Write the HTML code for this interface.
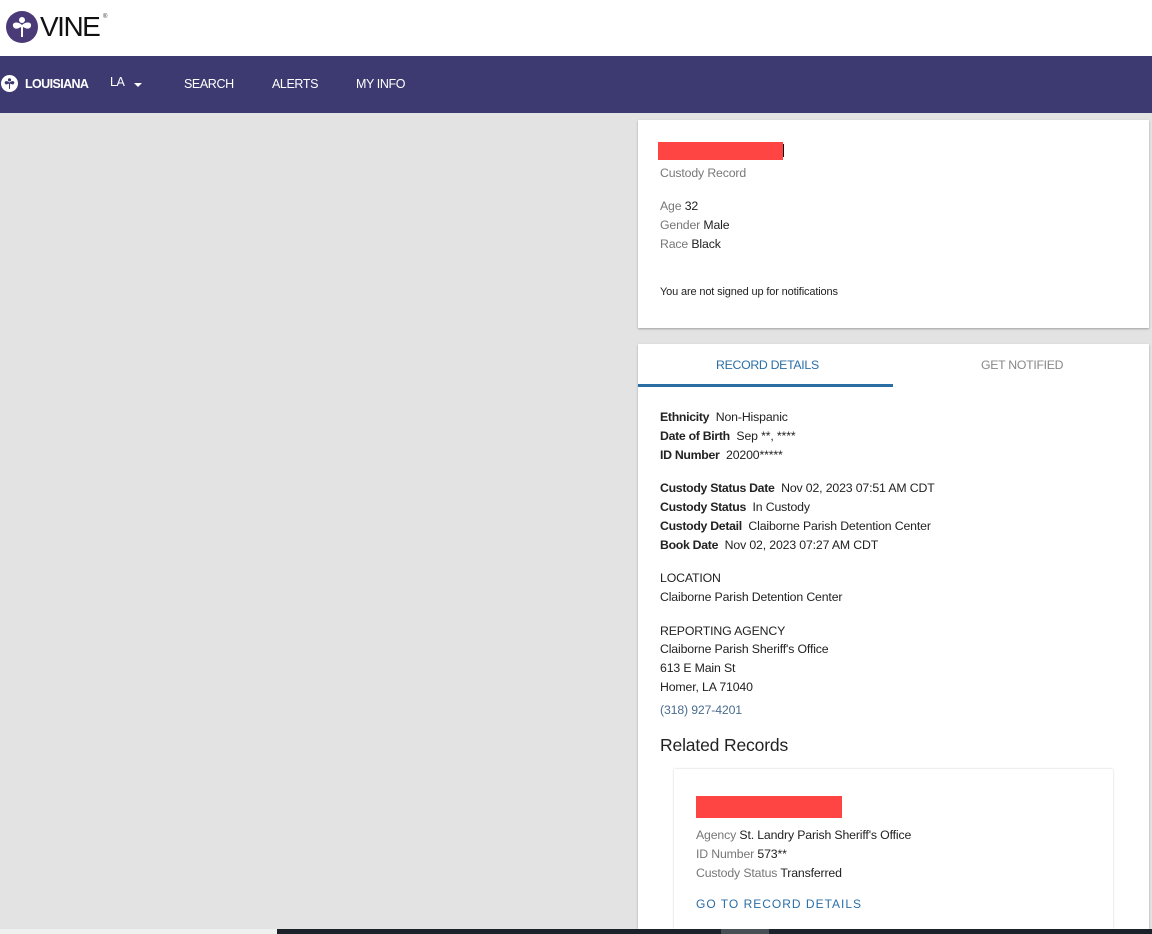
<!DOCTYPE html>
<html><head><meta charset="utf-8"><style>
*{margin:0;padding:0;box-sizing:border-box}
body{width:1152px;height:934px;overflow:hidden;background:#e3e3e3;font-family:"Liberation Sans",sans-serif;position:relative;color:#222}
.top{position:absolute;left:0;top:0;width:1152px;height:56px;background:#fff}
.nav{position:absolute;left:0;top:56px;width:1152px;height:57px;background:#3c3a70;color:#fff;font-size:12.5px}
.nav span{position:absolute;top:21px;letter-spacing:-0.4px}
.card{position:absolute;background:#fff;box-shadow:0 1px 2px rgba(0,0,0,.3)}
.t{position:absolute;font-size:12.3px;white-space:nowrap;letter-spacing:-0.15px}
.t b{font-weight:bold;letter-spacing:-0.3px}
.g{color:#777}
.red{position:absolute;background:#ff4444}
</style></head><body>
<div class="top">
<svg style="position:absolute;left:6px;top:11px" width="32" height="32" viewBox="0 0 32 32"><circle cx="16" cy="16" r="16" fill="#4b3a78"/><circle cx="16" cy="9" r="3" fill="#fff"/><path d="M16 14 C12 10 6 11 7 15 C8 19 13 18 16 15 C19 18 24 19 25 15 C26 11 20 10 16 14Z M15 15 L15 26 L17 26 L17 15Z" fill="#fff"/></svg>
<div style="position:absolute;left:40px;top:11px;font-size:28px;color:#111;letter-spacing:-1.5px">VINE</div>
<div style="position:absolute;left:103px;top:14px;font-size:6px;color:#333">®</div>
</div>
<div class="nav">
<svg style="position:absolute;left:1px;top:19px" width="17" height="17" viewBox="0 0 32 32"><circle cx="16" cy="16" r="16" fill="#fff"/><circle cx="16" cy="9" r="3" fill="#3c3a70"/><path d="M16 14 C12 10 6 11 7 15 C8 19 13 18 16 15 C19 18 24 19 25 15 C26 11 20 10 16 14Z M15 15 L15 26 L17 26 L17 15Z" fill="#3c3a70"/></svg>
<span style="left:25px;font-weight:bold;letter-spacing:-0.6px">LOUISIANA</span>
<span style="left:110px;top:19px">LA</span>
<div style="position:absolute;left:134px;top:27px;border-left:4px solid transparent;border-right:4px solid transparent;border-top:4px solid #fff"></div>
<span style="left:184px">SEARCH</span>
<span style="left:272px">ALERTS</span>
<span style="left:356px">MY INFO</span>
</div>

<div class="card" style="left:638px;top:120px;width:511px;height:208px"></div>
<div class="red" style="left:658px;top:142px;width:125px;height:18px"></div>
<div style="position:absolute;left:783px;top:144px;width:1px;height:13px;background:#111"></div>
<div class="t g" style="left:660px;top:166px">Custody Record</div>
<div class="t" style="left:660px;top:199px"><span class="g">Age</span> 32</div>
<div class="t" style="left:660px;top:218px"><span class="g">Gender</span> Male</div>
<div class="t" style="left:660px;top:237px"><span class="g">Race</span> Black</div>
<div class="t" style="left:660px;top:286px;font-size:11px">You are not signed up for notifications</div>

<div class="card" style="left:638px;top:344px;width:511px;height:585px"></div>
<div class="t" style="left:716px;top:358px;color:#2a6ea6;letter-spacing:-0.3px">RECORD DETAILS</div>
<div class="t" style="left:981px;top:358px;color:#888;letter-spacing:-0.3px">GET NOTIFIED</div>
<div style="position:absolute;left:638px;top:384px;width:255px;height:3px;background:#2a6ea6"></div>

<div class="t" style="left:660px;top:410px"><b>Ethnicity</b>&nbsp;&nbsp;Non-Hispanic</div>
<div class="t" style="left:660px;top:429px"><b>Date of Birth</b>&nbsp;&nbsp;Sep **, ****</div>
<div class="t" style="left:660px;top:448px"><b>ID Number</b>&nbsp;&nbsp;20200*****</div>
<div class="t" style="left:660px;top:481px"><b>Custody Status Date</b>&nbsp;&nbsp;Nov 02, 2023 07:51 AM CDT</div>
<div class="t" style="left:660px;top:500px"><b>Custody Status</b>&nbsp;&nbsp;In Custody</div>
<div class="t" style="left:660px;top:519px"><b>Custody Detail</b>&nbsp;&nbsp;Claiborne Parish Detention Center</div>
<div class="t" style="left:660px;top:538px"><b>Book Date</b>&nbsp;&nbsp;Nov 02, 2023 07:27 AM CDT</div>
<div class="t" style="left:660px;top:571px">LOCATION</div>
<div class="t" style="left:660px;top:590px">Claiborne Parish Detention Center</div>
<div class="t" style="left:660px;top:624px">REPORTING AGENCY</div>
<div class="t" style="left:660px;top:642px">Claiborne Parish Sheriff's Office</div>
<div class="t" style="left:660px;top:661px">613 E Main St</div>
<div class="t" style="left:660px;top:680px">Homer, LA 71040</div>
<div class="t" style="left:660px;top:703px;color:#4a6d90">(318) 927-4201</div>
<div class="t" style="left:660px;top:735px;font-size:17.5px">Related Records</div>

<div class="card" style="left:674px;top:769px;width:439px;height:160px;box-shadow:0 0 2px rgba(0,0,0,.2)"></div>
<div class="red" style="left:696px;top:796px;width:146px;height:22px"></div>
<div class="t" style="left:696px;top:828px"><span class="g">Agency</span> St. Landry Parish Sheriff's Office</div>
<div class="t" style="left:696px;top:847px"><span class="g">ID Number</span> 573**</div>
<div class="t" style="left:696px;top:866px"><span class="g">Custody Status</span> Transferred</div>
<div class="t" style="left:696px;top:897px;color:#2a6ea6;letter-spacing:1px;font-size:12px">GO TO RECORD DETAILS</div>

<div style="position:absolute;left:0;top:929px;width:277px;height:5px;background:#f0f0f0"></div>
<div style="position:absolute;left:277px;top:929px;width:875px;height:5px;background:#1d222a"></div>
<div style="position:absolute;left:721px;top:929px;width:48px;height:5px;background:#4a4e55"></div>
</body></html>
